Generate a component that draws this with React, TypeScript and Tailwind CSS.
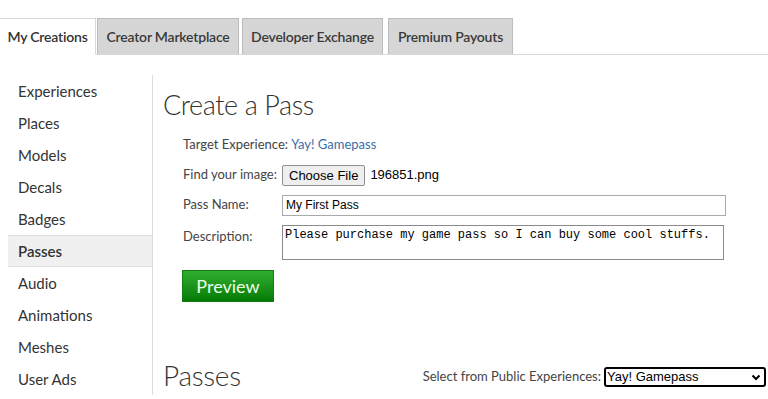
import { useState } from "react";

const tabs = ["My Creations", "Creator Marketplace", "Developer Exchange", "Premium Payouts"];

const navItems = [
  "Experiences",
  "Places",
  "Models",
  "Decals",
  "Badges",
  "Passes",
  "Audio",
  "Animations",
  "Meshes",
  "User Ads",
];

function Chevron() {
  return (
    <svg width="10" height="7" viewBox="0 0 10 7" className="pointer-events-none absolute right-[5px] top-[7px]">
      <path d="M1.5 1.5 L5 5 L8.5 1.5" fill="none" stroke="#000" strokeWidth="2" />
    </svg>
  );
}

export default function App() {
  const [active] = useState("Passes");

  return (
    <div className="h-[399px] w-[768px] overflow-hidden bg-white pt-[18px] font-['Lato','Noto_Sans',sans-serif] text-[#333]">
      {/* Tabs */}
      <div className="flex items-end border-b border-[#d8d8d8]">
        <div className="-mb-px flex h-[37px] w-[96px] items-center justify-center border border-b-white border-l-0 border-[#d8d8d8] bg-white text-[14px] font-semibold tracking-[-0.2px]">
          {tabs[0]}
        </div>
        <div className="ml-[1px] flex h-[36px] w-[142px] items-center justify-center border border-b-0 border-[#bdbdbd] bg-[#d6d6d6] text-[14px] font-semibold tracking-[-0.2px] text-[#3a3a3a]">
          {tabs[1]}
        </div>
        <div className="ml-[3px] flex h-[36px] w-[141px] items-center justify-center border border-b-0 border-[#bdbdbd] bg-[#d6d6d6] text-[14px] font-semibold tracking-[-0.2px] text-[#3a3a3a]">
          {tabs[2]}
        </div>
        <div className="ml-[5px] flex h-[36px] w-[125px] items-center justify-center border border-b-0 border-[#bdbdbd] bg-[#d6d6d6] text-[14px] font-semibold tracking-[-0.2px] text-[#3a3a3a]">
          {tabs[3]}
        </div>
      </div>

      <div className="mt-[20px] flex">
        {/* Sidebar */}
        <nav className="ml-[8px] w-[145px] shrink-0 border-r border-[#dcdcdc]">
          {navItems.map((n) => (
            <div
              key={n}
              className={`flex h-[32px] items-center pl-[10px] text-[15px] ${
                n === active ? "border-y border-[#e0e0e0] bg-[#f0f0f0] font-semibold" : ""
              }`}
            >
              {n}
            </div>
          ))}
        </nav>

        {/* Main */}
        <main className="flex-1 pl-[10px] pt-[14px]">
          <h1 className="text-[27px] font-light leading-[32px] tracking-[-0.4px] text-[#333]">Create a Pass</h1>

          <div className="mt-[9px] pl-[20px] text-[13px] text-[#444]">
            <div className="flex h-[30px] items-center">
              Target Experience:&nbsp;<span className="text-[#3a6ea8]">Yay! Gamepass</span>
            </div>

            <div className="flex h-[30px] items-center">
              <span className="w-[99px] shrink-0">Find your image:</span>
              <button className="h-[21px] rounded-[2px] border border-[#8f8f8f] bg-[#efefef] px-[6px] font-['Liberation_Sans',Arial,sans-serif] text-[13px] text-black">
                Choose File
              </button>
              <span className="ml-[5px] font-['Liberation_Sans',Arial,sans-serif] text-[13px] text-black">196851.png</span>
            </div>

            <div className="flex h-[30px] items-center">
              <span className="w-[99px] shrink-0">Pass Name:</span>
              <input
                readOnly
                value="My First Pass"
                className="h-[21px] w-[444px] border border-[#a9a9a9] px-[3px] font-['Liberation_Sans',Arial,sans-serif] text-[12px] text-black outline-none"
              />
            </div>

            <div className="flex pt-[5px]">
              <span className="w-[99px] shrink-0 pt-[2px]">Description:</span>
              <textarea
                readOnly
                value="Please purchase my game pass so I can buy some cool stuffs."
                className="h-[35px] w-[442px] resize-none border border-[#8a8a8a] px-[2px] py-[2px] font-['Liberation_Mono',monospace] text-[12px] leading-[15px] text-black outline-none"
              />
            </div>

            <button className="mt-[10px] -ml-px h-[32px] w-[92px] border border-[#147a14] bg-gradient-to-b from-[#2fae2f] to-[#037c03] text-[18px] text-[#eaffea]">
              Preview
            </button>
          </div>

          <div className="mt-[57px] flex items-center justify-between pr-[2px]">
            <h2 className="text-[28px] font-light leading-[32px] tracking-[-0.3px] text-[#333]">Passes</h2>
            <div className="flex items-center pt-[4px] text-[13px] text-[#444]">
              <span className="mr-[3px]">Select from Public Experiences:</span>
              <div className="relative">
                <select className="h-[20px] w-[162px] appearance-none rounded-[3px] border-2 border-black bg-white pl-[1px] font-['Liberation_Sans',Arial,sans-serif] text-[13px] leading-[14px] text-black outline-none">
                  <option>Yay! Gamepass</option>
                </select>
                <Chevron />
              </div>
            </div>
          </div>
        </main>
      </div>
    </div>
  );
}
